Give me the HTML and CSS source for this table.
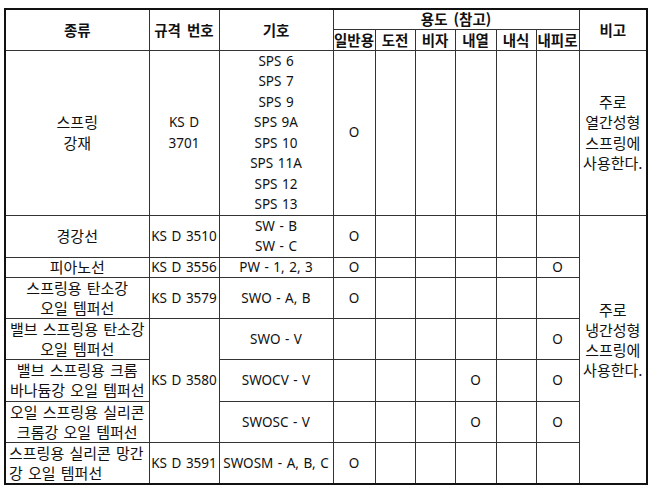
FILE: index.html
```html
<!DOCTYPE html>
<html lang="ko">
<head>
<meta charset="utf-8">
<link rel="stylesheet" href="styles.css">
</head>
<body>
<table class="spec">
  <colgroup>
    <col class="c-kind"><col class="c-std"><col class="c-sym">
    <col class="c-u1"><col class="c-u2"><col class="c-u3"><col class="c-u4"><col class="c-u5"><col class="c-u6">
    <col class="c-note">
  </colgroup>
  <thead>
    <tr class="h1">
      <th rowspan="2">종류</th>
      <th rowspan="2">규격 번호</th>
      <th rowspan="2">기호</th>
      <th colspan="6">용도 (참고)</th>
      <th rowspan="2">비고</th>
    </tr>
    <tr class="h2">
      <th>일반용</th><th>도전</th><th>비자</th><th>내열</th><th>내식</th><th>내피로</th>
    </tr>
  </thead>
  <tbody>
    <tr class="r-big">
      <td class="ko">스프링<br>강재</td>
      <td>KS D<br>3701</td>
      <td>SPS 6<br>SPS 7<br>SPS 9<br>SPS 9A<br>SPS 10<br>SPS 11A<br>SPS 12<br>SPS 13</td>
      <td>O</td><td></td><td></td><td></td><td></td><td></td>
      <td class="ko">주로<br>열간성형<br>스프링에<br>사용한다.</td>
    </tr>
    <tr class="r42">
      <td class="ko">경강선</td>
      <td>KS D 3510</td>
      <td>SW - B<br>SW - C</td>
      <td>O</td><td></td><td></td><td></td><td></td><td></td>
      <td rowspan="7" class="ko note-cold">주로<br>냉간성형<br>스프링에<br>사용한다.</td>
    </tr>
    <tr class="r20">
      <td class="ko">피아노선</td>
      <td>KS D 3556</td>
      <td>PW - 1, 2, 3</td>
      <td>O</td><td></td><td></td><td></td><td></td><td>O</td>
    </tr>
    <tr class="r41">
      <td class="ko">스프링용 탄소강<br>오일 템퍼선</td>
      <td>KS D 3579</td>
      <td>SWO - A, B</td>
      <td>O</td><td></td><td></td><td></td><td></td><td></td>
    </tr>
    <tr class="r41">
      <td class="ko">밸브 스프링용 탄소강<br>오일 템퍼선</td>
      <td rowspan="3">KS D 3580</td>
      <td>SWO - V</td>
      <td></td><td></td><td></td><td></td><td></td><td>O</td>
    </tr>
    <tr class="r42">
      <td class="ko">밸브 스프링용 크롬<br>바나듐강 오일 템퍼선</td>
      <td>SWOCV - V</td>
      <td></td><td></td><td></td><td>O</td><td></td><td>O</td>
    </tr>
    <tr class="r41">
      <td class="ko">오일 스프링용 실리콘<br>크롬강 오일 템퍼선</td>
      <td>SWOSC - V</td>
      <td></td><td></td><td></td><td>O</td><td></td><td>O</td>
    </tr>
    <tr class="r41">
      <td class="ko left">스프링용 실리콘 망간<br>강 오일 템퍼선</td>
      <td>KS D 3591</td>
      <td>SWOSM - A, B, C</td>
      <td>O</td><td></td><td></td><td></td><td></td><td></td>
    </tr>
  </tbody>
</table>
</body>
</html>
```

FILE: styles.css
```css
html, body {
  margin: 0;
  padding: 0;
  background: #ffffff;
}

body {
  font-family: "Noto Sans", "Noto Sans CJK KR", sans-serif;
  font-size: 13.5px;
  color: #111;
}

.spec {
  margin: 8px 0 0 4px;
  width: 642px;
  table-layout: fixed;
  border-collapse: collapse;
  border: 2px solid #111;
}

.c-kind { width: 144px; }
.c-std { width: 70px; }
.c-sym { width: 114px; }
.c-u1 { width: 42px; }
.c-u2 { width: 40px; }
.c-u3 { width: 40px; }
.c-u4 { width: 41px; }
.c-u5 { width: 40px; }
.c-u6 { width: 43px; }
.c-note { width: 68px; }

.spec th,
.spec td {
  border: 1px solid #333;
  padding: 0;
  text-align: center;
  vertical-align: middle;
  white-space: nowrap;
  line-height: 20px;
  overflow: hidden;
  word-spacing: 1px;
}

.spec th {
  font-family: "Noto Sans CJK KR", "Noto Sans", sans-serif;
  font-size: 14.5px;
  font-weight: bold;
  color: #111;
  line-height: 18px;
  word-spacing: 2px;
}

.spec td.ko {
  font-family: "Noto Sans CJK KR", sans-serif;
  font-size: 15px;
  word-spacing: 1px;
}

.spec tr.h1 { height: 20px; }
.spec tr.h2 { height: 21px; }
.spec tr.r-big { height: 165px; }
.spec tr.r-big td { line-height: 20.5px; }
.spec tr.r42 { height: 42px; }
.spec tr.r41 { height: 41px; }
.spec tr.r20 { height: 20px; }
.spec tr.r20 td { line-height: 18px; }

.spec td.left {
  text-align: left;
  padding-left: 3px;
}

.spec td.note-cold {
  padding-bottom: 18px;
}
```
